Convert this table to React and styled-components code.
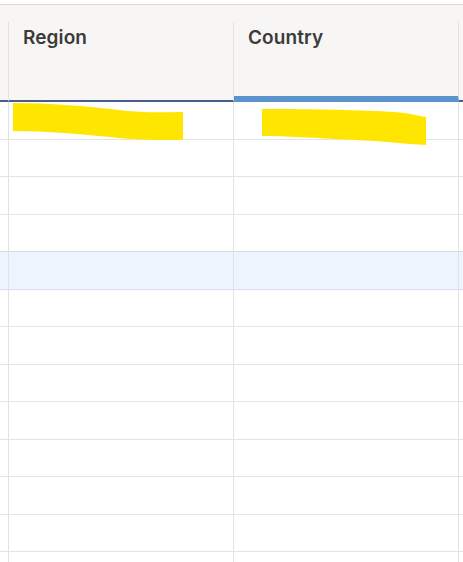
import styled, { createGlobalStyle } from "styled-components";

const GlobalStyle = createGlobalStyle`
  body {
    margin: 0;
    background: #ffffff;
    font-family: Inter, "Noto Sans", sans-serif;
  }
`;

const columns = "9px 225px 225px 1fr";

const Sheet = styled.div`
  width: 463px;
  height: 562px;
  overflow: hidden;
  padding-top: 4px;
  box-sizing: border-box;
`;

const HeaderRow = styled.div`
  display: grid;
  grid-template-columns: ${columns};
  height: 97px;
  background: #f7f6f4;
  border-top: 1px solid #dbdad8;
`;

const HeaderCell = styled.div`
  min-width: 0;
  margin-top: 17px;
  padding: ${(p) => (p.$label ? "4px 14px 0" : "0")};
  border-right: ${(p) => (p.$last ? "none" : "1px solid #e3e2e0")};
  border-bottom: ${(p) => (p.$active ? "6px solid #5b93cd" : "2px solid #4b5b8c")};
  font-size: 19px;
  font-weight: 600;
  color: #3b3b3b;
  letter-spacing: 0.1px;
`;

const Row = styled.div`
  display: grid;
  grid-template-columns: ${columns};
  height: 37.5px;
  box-sizing: border-box;
  background: ${(p) => (p.$selected ? "#edf4fd" : "#ffffff")};
  border-bottom: 1px solid ${(p) => (p.$tint ? "#d6dde8" : "#e4e4e4")};
`;

const Cell = styled.div`
  position: relative;
  min-width: 0;
  border-right: ${(p) => (p.$last ? "none" : "1px solid #e2e2e2")};
`;

const Mark = styled.svg`
  position: absolute;
  left: 0;
  top: 0;
  overflow: visible;
  pointer-events: none;
  z-index: 2;
`;

const RegionMark = () => (
  <Mark width="180" height="40" viewBox="0 0 180 40">
    <path
      d="M4 1 C 40 1, 80 4, 118 9 C 140 11, 160 10, 174 10 L 174 38 C 150 38, 130 38, 110 36 C 70 32, 40 29, 4 29 Z"
      fill="#ffe600"
    />
  </Mark>
);

const CountryMark = () => (
  <Mark width="200" height="45" viewBox="0 0 200 45">
    <path
      d="M28 7 C 80 7, 130 8, 160 10 C 175 11, 185 14, 192 15 L 192 43 C 170 42, 150 39, 120 38 C 80 36, 50 34, 28 34 Z"
      fill="#ffe600"
    />
  </Mark>
);

const rows = Array.from({ length: 13 }, (_, i) => i);

export default function App() {
  return (
    <>
      <GlobalStyle />
      <Sheet>
        <HeaderRow>
          <HeaderCell />
          <HeaderCell $label>Region</HeaderCell>
          <HeaderCell $label $active>Country</HeaderCell>
          <HeaderCell $last />
        </HeaderRow>
        {rows.map((i) => (
          <Row key={i} $selected={i === 4} $tint={i === 3 || i === 4}>
            <Cell />
            <Cell>{i === 0 && <RegionMark />}</Cell>
            <Cell>{i === 0 && <CountryMark />}</Cell>
            <Cell $last />
          </Row>
        ))}
      </Sheet>
    </>
  );
}
